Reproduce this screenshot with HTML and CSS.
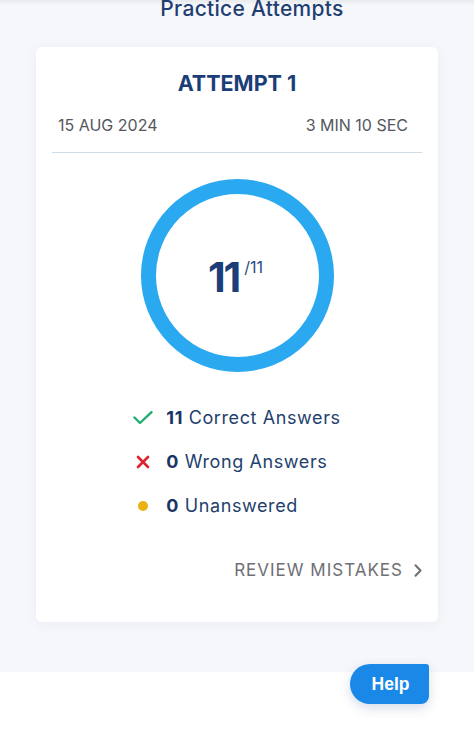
FILE: index.html
```html
<!DOCTYPE html>
<html>
<head>
<meta charset="utf-8">
<link rel="stylesheet" href="styles.css">
</head>
<body>
<div class="screen">
  <h1 class="title">Practice Attempts</h1>
  <div class="card">
    <h2 class="attempt">ATTEMPT 1</h2>
    <div class="meta"><span>15 AUG 2024</span><span>3 MIN 10 SEC</span></div>
    <div class="divider"></div>
    <div class="ring">
      <div class="score"><span class="big">11</span><span class="of">/11</span></div>
    </div>
    <ul class="stats">
      <li class="stat">
        <span class="ico"><svg width="20" height="14" viewBox="0 0 20 14"><path d="M1.5 6.5 L7 12 L18.5 1.2" fill="none" stroke="#1fae70" stroke-width="2.4" stroke-linecap="round" stroke-linejoin="round"/></svg></span>
        <span class="txt"><b>11</b> Correct Answers</span>
      </li>
      <li class="stat">
        <span class="ico"><svg width="14" height="14" viewBox="0 0 14 14"><path d="M2 2 L12 12 M12 2 L2 12" fill="none" stroke="#d9252b" stroke-width="2.6" stroke-linecap="round"/></svg></span>
        <span class="txt"><b>0</b> Wrong Answers</span>
      </li>
      <li class="stat">
        <span class="ico"><span class="dot"></span></span>
        <span class="txt"><b>0</b> Unanswered</span>
      </li>
    </ul>
    <div class="review">REVIEW MISTAKES <svg width="8" height="13" viewBox="0 0 8 13"><path d="M1.5 1.2 L6.5 6.5 L1.5 11.8" fill="none" stroke="#6f6f74" stroke-width="2" stroke-linecap="round" stroke-linejoin="round"/></svg></div>
  </div>
</div>
<button class="help">Help</button>
</body>
</html>
```

FILE: styles.css
```css
* { box-sizing: border-box; }
html, body { margin: 0; padding: 0; }
body {
  background: #ffffff;
  font-family: Inter, "Noto Sans", sans-serif;
  width: 474px;
  height: 729px;
  overflow: hidden;
  position: relative;
}
.screen {
  height: 672px;
  background: linear-gradient(#e9eaee 0, #eff0f4 3px, #f6f7fb 5px, #f6f7fb 100%);
  display: flex;
  flex-direction: column;
  align-items: center;
  overflow: hidden;
}
.title {
  margin: -3px 0 0 30px;
  font-size: 21px;
  line-height: 24px;
  font-weight: 500;
  letter-spacing: 0.3px;
  color: #1f3e72;
}
.card {
  margin-top: 26px;
  width: 402px;
  height: 575px;
  background: #ffffff;
  border-radius: 6px;
  box-shadow: 0 2px 14px rgba(40, 60, 110, 0.06);
  padding: 22px 16px 0;
  display: flex;
  flex-direction: column;
  align-items: center;
}
.attempt {
  margin: 0;
  font-size: 21.5px;
  line-height: 28px;
  font-weight: 700;
  color: #1b3d78;
}
.meta {
  align-self: stretch;
  margin-top: 18px;
  padding: 0 14px 0 6px;
  display: flex;
  justify-content: space-between;
  font-size: 16px;
  line-height: 20px;
  color: #54575d;
}
.divider {
  align-self: stretch;
  margin-top: 17px;
  height: 1px;
  background: #cfdbe8;
}
.ring {
  margin-top: 26px;
  width: 193px;
  height: 193px;
  border: 15px solid #2aa8f0;
  border-radius: 50%;
  display: flex;
  align-items: center;
  justify-content: center;
}
.score {
  display: flex;
  align-items: flex-start;
  color: #1b3d78;
  margin-top: 2px;
  margin-left: -3px;
}
.big {
  font-size: 41px;
  line-height: 40px;
  font-weight: 700;
  letter-spacing: -2px;
}
.of {
  font-size: 16px;
  line-height: 18px;
  margin-left: 5px;
  margin-top: 1px;
  color: #2a4a80;
}
.stats {
  list-style: none;
  margin: 34px 0 0;
  padding: 0;
  display: flex;
  flex-direction: column;
  gap: 20px;
}
.stat {
  display: flex;
  align-items: center;
  gap: 13px;
  height: 24px;
}
.ico {
  width: 20px;
  display: flex;
  align-items: center;
  justify-content: center;
}
.dot {
  width: 10px;
  height: 10px;
  border-radius: 50%;
  background: #e9b112;
}
.txt {
  font-size: 18px;
  line-height: 24px;
  letter-spacing: 0.6px;
  color: #243f6e;
}
.txt b {
  font-weight: 700;
  color: #1b3466;
}
.review {
  align-self: flex-end;
  margin-top: 41px;
  display: flex;
  align-items: center;
  gap: 11px;
  font-size: 17px;
  line-height: 22px;
  color: #6f6f74;
  letter-spacing: 1px;
}
.help {
  position: absolute;
  right: 45px;
  bottom: 25px;
  width: 79px;
  height: 40px;
  border: none;
  border-radius: 20px 3px 8px 20px;
  background: #1a88e6;
  color: #ffffff;
  font-family: "Liberation Sans", Arial, sans-serif;
  font-size: 17.5px;
  font-weight: 700;
  padding: 0 0 0 2px;
  box-shadow: 0 4px 12px rgba(20, 60, 120, 0.18);
}
```
